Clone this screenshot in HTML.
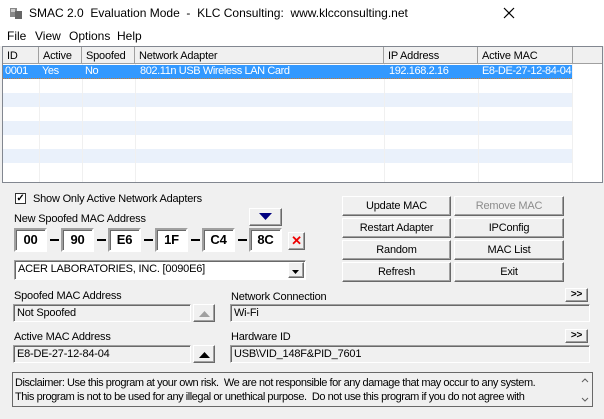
<!DOCTYPE html>
<html><head><style>
*{box-sizing:border-box;margin:0;padding:0}
body{width:604px;height:419px;background:#f0f0f0;font-family:"Liberation Sans",sans-serif;font-size:11px;color:#000;position:relative;overflow:hidden;letter-spacing:-0.2px}
.a{position:absolute}
.title{top:0;left:0;width:604px;height:26px;background:#fff;font-size:12px;letter-spacing:0}
.menu{top:26px;left:0;width:604px;height:20px;background:#fff;font-size:12px;letter-spacing:0}
.list{left:2px;top:46px;width:601px;height:137px;border:1px solid #828790;background:#fff;overflow:hidden}
.hdr{position:absolute;top:0;height:17px;background:#f0f0f0;border-right:1px solid #a0a0a0;border-bottom:1px solid #a0a0a0;padding:3px 0 0 4px;font-size:11px}
.row{position:absolute;left:0;width:569px;height:14px}
.vl{position:absolute;top:17px;bottom:0;width:1px;background:#f0f0f0}
.btn{position:absolute;height:20px;border:1px solid;border-color:#fff #696969 #696969 #fff;box-shadow:inset -1px -1px 0 #a0a0a0;background:#f0f0f0;text-align:center;line-height:18px;font-size:11px}
.fld{position:absolute;height:18px;border:1px solid;border-color:#a0a0a0 #fff #fff #a0a0a0;box-shadow:inset 1px 1px 0 #696969;background:#f0f0f0;padding:2px 0 0 3px;font-size:11px}
.mac{position:absolute;top:228px;width:33px;height:24px;border:2px solid;border-color:#a0a0a0 #fff #fff #a0a0a0;box-shadow:inset 1px 1px 0 #696969;background:#fff;font-weight:bold;font-size:13px;text-align:center;line-height:20px}
.dash{position:absolute;top:239px;width:9px;height:2px;background:#000}
</style></head><body>
<div class="a title">
<svg class="a" style="left:8px;top:5px" width="16" height="16"><rect x="2" y="3" width="7" height="9" fill="#888"/><rect x="7" y="6" width="7" height="8" fill="#666"/><rect x="3" y="4" width="4" height="3" fill="#ccc"/></svg>
<span class="a" style="left:29px;top:6px">SMAC 2.0&nbsp; Evaluation Mode&nbsp; -&nbsp; KLC Consulting:&nbsp; www.klcconsulting.net</span>
<svg class="a" style="left:503px;top:7px" width="12" height="12"><path d="M1 1L11 11M11 1L1 11" stroke="#000" stroke-width="1.2"/></svg>
</div>
<div class="a menu"><span class="a" style="left:7px;top:3px">File</span><span class="a" style="left:35px;top:3px">View</span><span class="a" style="left:69px;top:3px">Options</span><span class="a" style="left:117px;top:3px">Help</span></div>
<div class="a list">
<div class="hdr" style="left:0;width:36px">ID</div>
<div class="hdr" style="left:36px;width:43px">Active</div>
<div class="hdr" style="left:79px;width:53px">Spoofed</div>
<div class="hdr" style="left:132px;width:249px">Network Adapter</div>
<div class="hdr" style="left:381px;width:94px">IP Address</div>
<div class="hdr" style="left:475px;width:95px">Active MAC</div>
<div class="hdr" style="left:570px;width:31px"></div>
<div class="row" style="top:32px;background:#fff"></div>
<div class="row" style="top:46px;background:#eaf1fb"></div>
<div class="row" style="top:60px;background:#fff"></div>
<div class="row" style="top:74px;background:#eaf1fb"></div>
<div class="row" style="top:88px;background:#fff"></div>
<div class="row" style="top:102px;background:#eaf1fb"></div>
<div class="row" style="top:116px;background:#fff"></div>
<div class="vl" style="left:36px"></div><div class="vl" style="left:79px"></div><div class="vl" style="left:132px"></div><div class="vl" style="left:381px"></div><div class="vl" style="left:475px"></div><div class="vl" style="left:569px"></div>
<div class="row" style="top:18px;height:14px;background:#3399ff;color:#fff;border-bottom:1px dotted #c87a30;letter-spacing:-0.4px">
<span class="a" style="left:2px;top:0">0001</span><span class="a" style="left:39px;top:0">Yes</span><span class="a" style="left:82px;top:0">No</span><span class="a" style="left:137px;top:0">802.11n USB Wireless LAN Card</span><span class="a" style="left:386px;top:0">192.168.2.16</span><span class="a" style="left:479px;top:0">E8-DE-27-12-84-04</span></div>
</div>
<div class="a" style="left:15px;top:193px;width:11px;height:11px;border:1px solid #333;background:#fff;font-size:10px;line-height:9px;text-align:center;font-weight:bold">✓</div>
<span class="a" style="left:33px;top:193px">Show Only Active Network Adapters</span>
<span class="a" style="left:14px;top:213px">New Spoofed MAC Address</span>
<div class="btn" style="left:249px;top:208px;width:33px;height:18px"><svg width="14" height="8" style="margin-top:4px"><path d="M0 0H13L6.5 7Z" fill="#000080"/></svg></div>
<div class="mac" style="left:14px">00</div><div class="dash" style="left:50px"></div>
<div class="mac" style="left:61px">90</div><div class="dash" style="left:97px"></div>
<div class="mac" style="left:108px">E6</div><div class="dash" style="left:144px"></div>
<div class="mac" style="left:155px">1F</div><div class="dash" style="left:191px"></div>
<div class="mac" style="left:202px">C4</div><div class="dash" style="left:238px"></div>
<div class="mac" style="left:249px">8C</div>
<div class="btn" style="left:288px;top:232px;width:17px;height:18px;color:#e00;font-weight:bold;font-size:13px;line-height:15px">✕</div>
<div class="fld" style="left:14px;top:260px;width:292px;height:20px;background:#fff">ACER LABORATORIES, INC. [0090E6]</div>
<div class="btn" style="left:288px;top:262px;width:16px;height:16px"><svg width="8" height="5" style="margin-top:5px"><path d="M0 0H7L3.5 4Z"/></svg></div>
<div class="btn" style="left:342px;top:196px;width:109px">Update MAC</div>
<div class="btn" style="left:454px;top:196px;width:110px;color:#8c8c8c">Remove MAC</div>
<div class="btn" style="left:342px;top:218px;width:109px">Restart Adapter</div>
<div class="btn" style="left:454px;top:218px;width:110px">IPConfig</div>
<div class="btn" style="left:342px;top:240px;width:109px">Random</div>
<div class="btn" style="left:454px;top:240px;width:110px">MAC List</div>
<div class="btn" style="left:342px;top:262px;width:109px">Refresh</div>
<div class="btn" style="left:454px;top:262px;width:110px">Exit</div>
<span class="a" style="left:14px;top:290px">Spoofed MAC Address</span>
<div class="fld" style="left:13px;top:304px;width:178px">Not Spoofed</div>
<div class="btn" style="left:193px;top:304px;width:22px;height:18px"><svg width="11" height="6" style="margin-top:5px"><path d="M0 6H11L5.5 0Z" fill="#a0a0a0"/></svg></div>
<span class="a" style="left:231px;top:291px">Network Connection</span>
<div class="btn" style="left:565px;top:288px;width:23px;height:14px;line-height:11px;font-weight:bold;font-size:10px">&gt;&gt;</div>
<div class="fld" style="left:230px;top:304px;width:360px">Wi-Fi</div>
<span class="a" style="left:14px;top:331px">Active MAC Address</span>
<div class="fld" style="left:13px;top:345px;width:178px">E8-DE-27-12-84-04</div>
<div class="btn" style="left:193px;top:345px;width:22px;height:18px"><svg width="11" height="6" style="margin-top:5px"><path d="M0 6H11L5.5 0Z"/></svg></div>
<span class="a" style="left:231px;top:331px">Hardware ID</span>
<div class="btn" style="left:565px;top:329px;width:23px;height:14px;line-height:11px;font-weight:bold;font-size:10px">&gt;&gt;</div>
<div class="fld" style="left:230px;top:345px;width:360px">USB\VID_148F&amp;PID_7601</div>
<div class="a" style="left:12px;top:372px;width:581px;height:35px;border:1px solid #696969;background:#f0f0f0;padding:3px 0 0 2px;line-height:14px;font-size:11px;letter-spacing:-0.45px;white-space:nowrap;overflow:hidden"><div style="width:560px;overflow:hidden">Disclaimer: Use this program at your own risk.&nbsp; We are not responsible for any damage that may occur to any system.<br>This program is not to be used for any illegal or unethical purpose.&nbsp; Do not use this program if you do not agree with</div></div>
<svg class="a" style="left:581px;top:377px" width="8" height="26"><path d="M1 5L4 2L7 5M1 21L4 24L7 21" stroke="#606060" fill="none"/></svg>
</body></html>
